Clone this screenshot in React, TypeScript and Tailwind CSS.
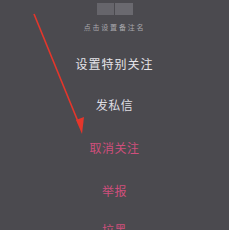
import React from "react";

export default function App() {
  const font = { fontFamily: '"Noto Sans CJK SC", "Noto Sans", sans-serif' };
  return (
    <div className="relative w-[229px] h-[230px] overflow-hidden bg-[#4b4a4f]" style={font}>
      <div className="flex flex-col items-center">
        <div className="mt-[3px] flex h-[12px] gap-[1px]">
          <div className="w-[17px] bg-[#66656b]" />
          <div className="w-[18px] bg-[#6a696f]" />
        </div>
        <div className="mt-[7px] text-[7px] leading-[10px] tracking-[1.8px] text-[#a9a8ad]">点击设置备注名</div>
        <div className="mt-[24px] text-[12px] leading-[16px] tracking-[1px] text-[#e6e5ea]">设置特别关注</div>
        <div className="mt-[25px] text-[12px] leading-[16px] tracking-[0.5px] text-[#dedde2]">发私信</div>
        <div className="mt-[27px] text-[12px] leading-[16px] tracking-[0.5px] text-[#cf4f7c]">取消关注</div>
        <div className="mt-[27px] text-[12px] leading-[16px] tracking-[0.5px] text-[#cf4f7c]">举报</div>
        <div className="mt-[23px] text-[12px] leading-[16px] tracking-[0.5px] text-[#cf4f7c]">拉黑</div>
      </div>
      <svg className="absolute left-0 top-0" width="229" height="230" viewBox="0 0 229 230">
        <line x1="34" y1="14" x2="79" y2="124" stroke="#e5362b" strokeWidth="1.6" />
        <polygon points="82,134 76,120 84,117" fill="#e5362b" />
      </svg>
    </div>
  );
}
